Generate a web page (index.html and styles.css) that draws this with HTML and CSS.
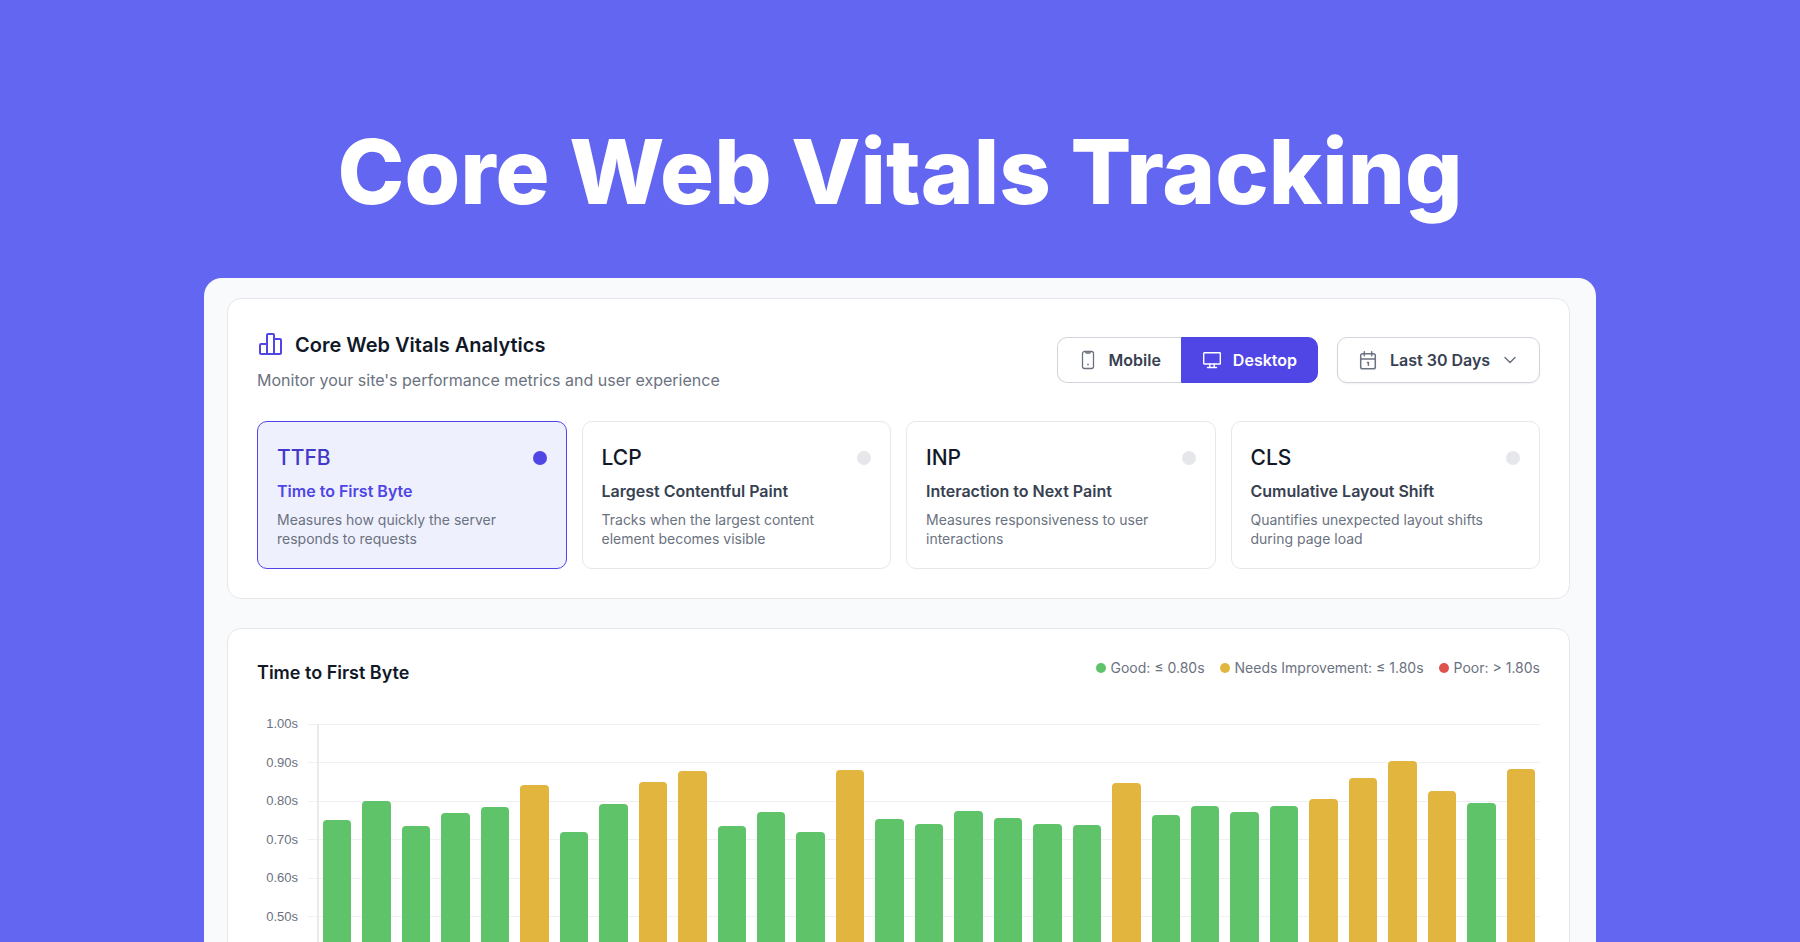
FILE: index.html
```html
<!DOCTYPE html>
<html lang="en">
<head>
    <meta charset="utf-8">
    <title>Core Web Vitals Tracking</title>
    <link rel="stylesheet" href="styles.css">
</head>
<body>
    <div class="page">
        <h1 class="hero-title">Core Web Vitals Tracking</h1>

        <main class="panel">
            <section class="card">
                <div class="card-header">
                    <div>
                        <h2 class="title">
                            <svg class="title-icon" viewBox="0 0 26 26" fill="none" stroke="currentColor" stroke-width="2" stroke-linejoin="round">
                                <path d="M3 13a1 1 0 0 1 1-1h6v10H4a1 1 0 0 1-1-1z"/>
                                <path d="M10 3a1 1 0 0 1 1-1h5a1 1 0 0 1 1 1v19h-7z"/>
                                <path d="M17 7h6a1 1 0 0 1 1 1v13a1 1 0 0 1-1 1h-6z"/>
                            </svg>
                            Core Web Vitals Analytics
                        </h2>
                        <p class="subtitle">Monitor your site's performance metrics and user experience</p>
                    </div>
                    <div class="toolbar">
                        <div class="device-switch">
                            <button type="button" class="device">
                                <svg class="icon" viewBox="0 0 20 20" fill="none" stroke="currentColor" stroke-width="1.3">
                                    <rect x="4.5" y="1.5" width="11" height="17" rx="2"/>
                                    <path d="M7.5 1.5l.8 1.5h3.4l.8-1.5M9.2 14.5h1.6"/>
                                </svg>
                                Mobile
                            </button>
                            <button type="button" class="device active">
                                <svg class="icon" viewBox="0 0 20 20" fill="none" stroke="currentColor" stroke-width="1.4" stroke-linejoin="round" stroke-linecap="round">
                                    <rect x="1.7" y="2.7" width="16.6" height="11.3" rx="0.6"/>
                                    <path d="M7.8 14v3.3M12.2 14v3.3M5.5 17.5h9"/>
                                </svg>
                                Desktop
                            </button>
                        </div>
                        <div class="range">
                            <svg class="icon" viewBox="0 0 20 20" fill="none" stroke="currentColor" stroke-width="1.5" stroke-linecap="round">
                                <rect x="2.7" y="3.7" width="14.6" height="15" rx="1.8"/>
                                <path d="M2.7 9h14.6M6.3 1.8v4M13.7 1.8v4M9.4 12.5h1v2.8"/>
                            </svg>
                            <select class="range-select" aria-label="Date range">
                                <option>Last 30 Days</option>
                            </select>
                            <svg class="chevron" viewBox="0 0 14 14" fill="none" stroke="currentColor" stroke-width="1.5" stroke-linecap="round" stroke-linejoin="round">
                                <path d="M2 4.5l5 5 5-5"/>
                            </svg>
                        </div>
                    </div>
                </div>

                <div class="metrics">
                    <button type="button" class="metric selected">
                        <span class="metric-top">TTFB <span class="metric-dot"></span></span>
                        <span class="metric-name">Time to First Byte</span>
                        <span class="metric-text">Measures how quickly the server responds to requests</span>
                    </button>
                    <button type="button" class="metric">
                        <span class="metric-top">LCP <span class="metric-dot"></span></span>
                        <span class="metric-name">Largest Contentful Paint</span>
                        <span class="metric-text">Tracks when the largest content element becomes visible</span>
                    </button>
                    <button type="button" class="metric">
                        <span class="metric-top">INP <span class="metric-dot"></span></span>
                        <span class="metric-name">Interaction to Next Paint</span>
                        <span class="metric-text">Measures responsiveness to user interactions</span>
                    </button>
                    <button type="button" class="metric">
                        <span class="metric-top">CLS <span class="metric-dot"></span></span>
                        <span class="metric-name">Cumulative Layout Shift</span>
                        <span class="metric-text">Quantifies unexpected layout shifts during page load</span>
                    </button>
                </div>
            </section>

            <section class="card">
                <div class="chart-header">
                    <h3 class="chart-title">Time to First Byte</h3>
                    <ul class="legend">
                        <li><span class="dot good"></span>Good: ≤ 0.80s</li>
                        <li><span class="dot warn"></span>Needs Improvement: ≤ 1.80s</li>
                        <li><span class="dot poor"></span>Poor: &gt; 1.80s</li>
                    </ul>
                </div>
                <div class="chart">
                    <div class="ticks" id="ticks"></div>
                    <div class="bars" id="bars"></div>
                </div>
            </section>
        </main>
    </div>

    <script>
        const values = [
            0.750, 0.799, 0.735, 0.770, 0.785, 0.842, 0.720, 0.791, 0.849, 0.877,
            0.735, 0.772, 0.720, 0.880, 0.753, 0.740, 0.774, 0.757, 0.740, 0.739,
            0.846, 0.763, 0.786, 0.771, 0.787, 0.806, 0.859, 0.904, 0.826, 0.795,
            0.883
        ];
        const ticks = document.getElementById('ticks');
        const bars = document.getElementById('bars');

        for (let i = 10; i >= 0; i--) {
            ticks.innerHTML += '<div class="tick">' + (i / 10).toFixed(2) + 's</div>';
        }

        values.forEach(function(value) {
            const bar = document.createElement('div');
            bar.className = value <= 0.8 ? 'bar good' : 'bar warn';
            bar.style.height = (value * 100) + '%';
            bars.appendChild(bar);
        });
    </script>
</body>
</html>
```
FILE: styles.css
```css
* { box-sizing: border-box; }
body { margin: 0; background: #6366f1; font-family: Inter, "Liberation Sans", sans-serif; color: #111827; }
h1, h2, h3, p, ul { margin: 0; padding: 0; }
button, select { font: inherit; color: inherit; cursor: pointer; }

.page { height: 100vh; overflow: hidden; padding: 127px 24px 0; }
.hero-title { color: #fff; font-size: 90px; line-height: 90px; font-weight: 800; text-align: center; }

.panel { max-width: 1392px; margin: 61px auto 0; padding: 20px 26px 26px 23px; background: #f9fafc; border-radius: 18px; display: flex; flex-direction: column; gap: 29px; }
.card { background: #fff; border: 1px solid #e5e7eb; border-radius: 14px; padding: 29px; }

.card-header { display: flex; justify-content: space-between; align-items: center; margin-bottom: 29px; }
.title { display: flex; align-items: center; gap: 12px; font-size: 20px; line-height: 34px; font-weight: 600; }
.title-icon { width: 26px; height: 26px; color: #4f46e5; }
.subtitle { margin-top: 6px; font-size: 16px; line-height: 24px; color: #6b7280; }

.toolbar { display: flex; gap: 19px; font-size: 16px; font-weight: 600; color: #374151; }
.icon { width: 20px; height: 20px; color: #6b7280; }
.device-switch { display: flex; }
.device { display: flex; align-items: center; gap: 11px; height: 46px; padding: 0 20px; border: 1px solid #d1d5db; background: #fff; }
.device:first-child { border-right: 0; border-radius: 10px 0 0 10px; }
.device:last-child { border-radius: 0 10px 10px 0; }
.device.active { background: #4f46e5; border-color: #4f46e5; color: #fff; }
.device.active .icon { color: #fff; }
.range { display: flex; align-items: center; gap: 12px; height: 46px; padding: 0 22px 0 20px; border: 1px solid #d1d5db; border-radius: 10px; background: #fff; box-shadow: 0 1px 2px rgba(0, 0, 0, 0.06); }
.range-select { appearance: none; border: 0; padding: 0; background: none; }
.chevron { width: 14px; height: 14px; color: #6b7280; }

.metrics { display: grid; grid-template-columns: repeat(4, 1fr); gap: 15px; }
.metric { display: flex; flex-direction: column; padding: 22px 19px 20px; border: 1px solid #e5e7eb; border-radius: 10px; background: #fff; text-align: left; }
.metric-top { display: flex; align-items: center; justify-content: space-between; align-self: stretch; font-size: 21px; line-height: 28px; font-weight: 500; }
.metric-dot { width: 14px; height: 14px; border-radius: 50%; background: #e5e7eb; }
.metric-name { margin-top: 7px; font-size: 16px; line-height: 24px; font-weight: 600; color: #374151; }
.metric-text { margin-top: 7px; padding-right: 24px; font-size: 14px; line-height: 19px; color: #6b7280; }
.metric.selected { background: #eef0fe; border-color: #4f46e5; }
.metric.selected .metric-top { color: #4338ca; }
.metric.selected .metric-name { color: #4f46e5; }
.metric.selected .metric-dot { background: #4f46e5; }

.chart-header { display: flex; justify-content: space-between; align-items: flex-start; margin-bottom: 28px; }
.chart-title { font-size: 18px; line-height: 30px; font-weight: 600; }
.legend { display: flex; gap: 15px; list-style: none; font-size: 14px; line-height: 20px; color: #6b7280; }
.legend li { display: flex; align-items: center; gap: 5px; }
.dot { width: 10px; height: 10px; border-radius: 50%; }
.good { background: #5fc36a; }
.warn { background: #e1b53e; }
.poor { background: #de524c; }

/* ticks and bars share one grid cell */
.chart { display: grid; }
.ticks { grid-area: 1 / 1; display: flex; flex-direction: column; justify-content: space-between; height: 401px; }
.tick { display: grid; grid-template-columns: 41px 1fr; gap: 10px; align-items: center; height: 16px; font-family: "Liberation Sans", Arial, sans-serif; font-size: 13px; line-height: 16px; text-align: right; color: #6b7280; }
.tick::after { content: ""; height: 1px; background: #f0f0f2; }
.bars { grid-area: 1 / 1; display: flex; align-items: flex-end; gap: 11px; margin: 8px 0 8px 60px; padding: 0 5px 0 4px; border-left: 2px solid #e9eaec; }
.bar { flex: 1; border-radius: 4px 4px 0 0; }
```
